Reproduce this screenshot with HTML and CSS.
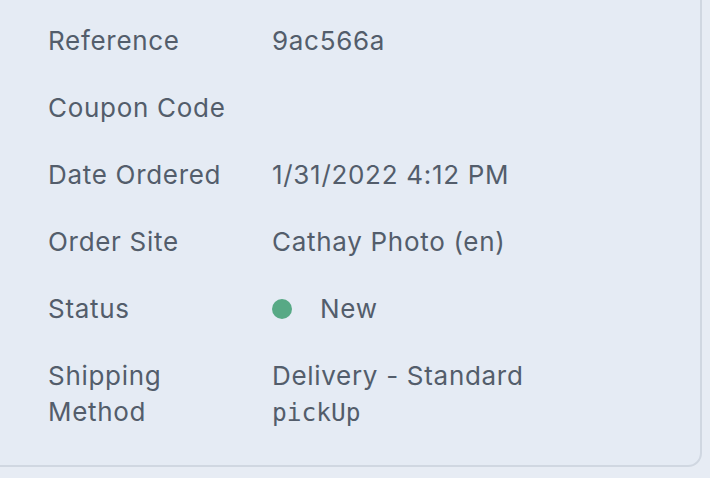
FILE: index.html
```html
<!DOCTYPE html>
<html>
<head>
<meta charset="utf-8">
<link rel="stylesheet" href="styles.css">
</head>
<body>
<div class="page">
  <div class="card">
    <dl class="details">
      <dt>Reference</dt><dd>9ac566a</dd>
      <dt>Coupon Code</dt><dd></dd>
      <dt>Date Ordered</dt><dd>1/31/2022 4:12 PM</dd>
      <dt>Order Site</dt><dd>Cathay Photo (en)</dd>
      <dt>Status</dt><dd><span class="status"><span class="dot"></span>New</span></dd>
      <dt>Shipping<br>Method</dt><dd>Delivery - Standard<br><code>pickUp</code></dd>
    </dl>
  </div>
</div>
</body>
</html>
```
FILE: styles.css
```css
html, body {
  margin: 0;
  padding: 0;
  background: #e7ecf4;
}
.page {
  width: 710px;
  height: 478px;
  overflow: hidden;
  font-family: Inter, "Liberation Sans", sans-serif;
  color: #535d6b;
}
.card {
  margin: -20px 8px 0 -20px;
  height: 487px;
  box-sizing: border-box;
  background: #e5ebf4;
  border: 2px solid #d0d7e1;
  border-radius: 14px;
  padding: 41px 0 0 66px;
}
.details {
  margin: 0;
  display: grid;
  grid-template-columns: 224px 1fr;
  row-gap: 31px;
  font-size: 26px;
  letter-spacing: 0.7px;
  line-height: 36px;
}
.details dt, .details dd {
  margin: 0;
  min-height: 36px;
}
.status {
  display: flex;
  align-items: center;
  gap: 28px;
}
.dot {
  width: 20px;
  height: 20px;
  border-radius: 50%;
  background: #57a985;
}
code {
  font-family: "DejaVu Sans Mono", monospace;
  font-size: 24.5px;
  letter-spacing: 0;
}
```
